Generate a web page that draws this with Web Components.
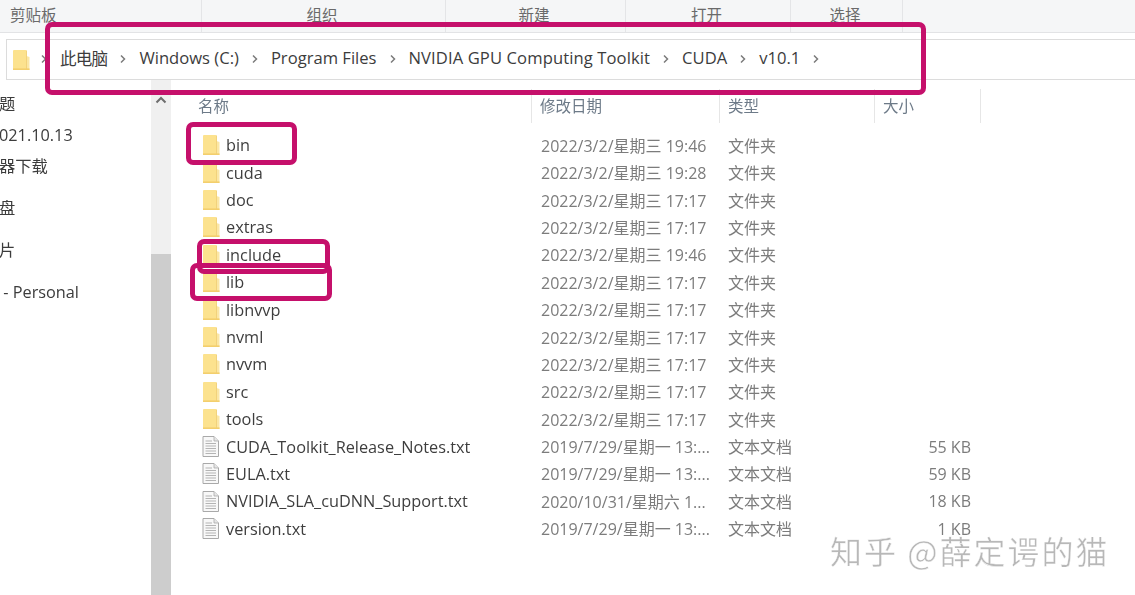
<!DOCTYPE html>
<html lang="zh">
<head>
<meta charset="utf-8">
<title>CUDA v10.1</title>
<style>
  html, body { margin: 0; height: 100%; background: #fff; overflow: hidden; }
  body { font-family: "Open Sans", "Noto Sans CJK SC", sans-serif; }
</style>
</head>
<body>
<explorer-window></explorer-window>

<script>
const FONT = `"Open Sans", "Noto Sans CJK SC", sans-serif`;

const FOLDER_ICON = `
<svg width="18" height="22" viewBox="0 0 18 22">
  <path d="M1 2Q1 1 2 1H13.5Q14.5 1 14.5 2V21H2Q1 21 1 20Z" fill="#fce28e"/>
  <path d="M14.5 7 17.5 8V21H14.5Z" fill="#fbe7a6"/>
  <path d="M14.5 1.5V20" stroke="#efcb6c" stroke-width=".8"/>
  <path d="M1 20.2H17.5" stroke="#f3cf6d" stroke-width="1.6"/>
</svg>`;

const DOC_ICON = `
<svg width="17" height="21" viewBox="0 0 17 21">
  <path d="M1 .5H12L16.5 5V20.5H1Z" fill="#f8f8f8" stroke="#a9a9a9"/>
  <path d="M12 .5V5H16.5" fill="#e6e6e6" stroke="#a9a9a9" stroke-width=".8"/>
  <path d="M3.5 5H10M3.5 7.5H14M3.5 10H14M3.5 12.5H14M3.5 15H14M3.5 17.5H14" stroke="#b4b4b4"/>
</svg>`;

class RibbonBar extends HTMLElement {
  constructor() {
    super();
    this.attachShadow({ mode: "open" }).innerHTML = `
<style>
  :host {
    display: grid;
    grid-template-columns: 202px 244px 180px 165px 112px 1fr;
    height: 32px;
    background: #f5f6f7;
    border-bottom: 1px solid #e2e3e5;
    font: 15.5px ${FONT};
    color: #6a6a6a;
  }
  div { text-align: center; line-height: 30px; border-right: 1px solid #e4e5e7; overflow: hidden; padding-right: 3px; }
  div:first-of-type { text-align: left; padding-left: 10px; }
  div:last-of-type { border: 0; }
</style>
<div>剪贴板</div><div>组织</div><div>新建</div><div>打开</div><div>选择</div><div></div>`;
  }
}

class AddressBar extends HTMLElement {
  constructor() {
    super();
    const parts = ["此电脑", "Windows (C:)", "Program Files", "NVIDIA GPU Computing Toolkit", "CUDA", "v10.1"];
    const chev = `<svg class="chev" width="6" height="10" viewBox="0 0 6 10"><path d="M1 1.5 4.5 5 1 8.5" fill="none" stroke="#7b7b7b" stroke-width="1.5"/></svg>`;
    this.attachShadow({ mode: "open" }).innerHTML = `
<style>
  :host {
    display: flex;
    align-items: center;
    margin: 6px 0 0 6px;
    padding: 0 0 4px 5px;
    height: 35px;
    background: #fff;
    border: 1px solid #dcdcdc;
    border-right: 0;
    font: 16.6px ${FONT};
    color: #3c3c3c;
    white-space: nowrap;
  }
  .home { display: flex; margin: 4px 11px 0 0; }
  .chev { margin: 2px 13px 0 13px; flex: none; }
  .home + .chev { margin: 2px 13px 0 0; }
  .p0 { letter-spacing: -.8px; }
  .p3 { letter-spacing: .1px; }
</style>
<span class="home">${FOLDER_ICON}</span>${chev}${parts.map((p, i) => `<span class="p${i}">${p}</span>${chev}`).join("")}`;
  }
}

class NavPane extends HTMLElement {
  constructor() {
    super();
    this.attachShadow({ mode: "open" }).innerHTML = `
<style>
  :host {
    display: flex;
    flex-direction: column;
    width: 151px;
    flex: none;
    padding-top: 13px;
    box-sizing: border-box;
    font: 16.3px/22px ${FONT};
    color: #3c3c3c;
    white-space: nowrap;
    overflow: hidden;
  }
  div { margin-left: -1px; }
  .a { margin-top: 9px; }
  .b { margin-top: 20px; }
</style>
<div>题</div>
<div class="a">021.10.13</div>
<div class="a">器下载</div>
<div class="b">盘</div>
<div class="b">片</div>
<div class="b">&nbsp;- Personal</div>`;
  }
}

class ScrollTrack extends HTMLElement {
  constructor() {
    super();
    this.attachShadow({ mode: "open" }).innerHTML = `
<style>
  :host {
    display: flex;
    flex-direction: column;
    width: 20px;
    flex: none;
    background: #f0f0f0;
  }
  .up { height: 174px; display: flex; justify-content: center; padding-top: 16px; box-sizing: border-box; }
  .thumb { flex: 1; background: #cdcdcd; }
</style>
<div class="up"><svg width="12" height="8" viewBox="0 0 12 8"><path d="M1.5 6.5 6 2l4.5 4.5" fill="none" stroke="#6e6e6e" stroke-width="2"/></svg></div>
<div class="thumb"></div>`;
  }
}

class ColumnHeader extends HTMLElement {
  constructor() {
    super();
    this.attachShadow({ mode: "open" }).innerHTML = `
<style>
  :host {
    display: grid;
    grid-template-columns: 361px 188px 155px 106px;
    height: 34px;
    margin-top: 9px;
    font: 15.5px/34px ${FONT};
    color: #6d7a88;
  }
  div { border-right: 1px solid #e6e6e6; padding-left: 8px; }
  div:first-of-type { padding-left: 27px; }
</style>
<div>名称</div><div>修改日期</div><div>类型</div><div>大小</div>`;
  }
}

class FileRow extends HTMLElement {
  constructor() {
    super();
    this.attachShadow({ mode: "open" }).innerHTML = `
<style>
  :host {
    display: grid;
    grid-template-columns: 28px 315px 187px 120px 123px;
    align-items: center;
    height: 27.4px;
    font: 16.3px ${FONT};
    white-space: nowrap;
  }
  .icon { display: flex; padding-left: 4px; }
  .name { color: #3e3e3e; }
  .date, .type, .size { color: #7c7c7c; font-size: 16px; }
  .date, .type { padding-bottom: 1px; }
  .size { text-align: right; }
</style>
<span class="icon"></span><span class="name"></span><span class="date"></span><span class="type"></span><span class="size"></span>`;
  }

  connectedCallback() {
    const root = this.shadowRoot;
    root.querySelector(".icon").innerHTML = this.getAttribute("kind") === "doc" ? DOC_ICON : FOLDER_ICON;
    root.querySelector(".name").textContent = this.getAttribute("name");
    root.querySelector(".date").textContent = this.getAttribute("date");
    root.querySelector(".type").textContent = this.getAttribute("kind") === "doc" ? "文本文档" : "文件夹";
    root.querySelector(".size").textContent = this.getAttribute("size") || "";
  }
}

class FileList extends HTMLElement {
  constructor() {
    super();
    this.attachShadow({ mode: "open" }).innerHTML = `
<style>
  :host { display: block; flex: 1; min-width: 0; }
  .rows { margin: 8.6px 0 0 27px; width: 773px; }
</style>
<column-header></column-header>
<div class="rows"><slot></slot></div>`;
  }
}

class MarkBox extends HTMLElement {
  constructor() {
    super();
    this.attachShadow({ mode: "open" }).innerHTML = `
<style>
  :host {
    position: absolute;
    box-sizing: border-box;
    border: 5px solid #c5106b;
    border-radius: 7px;
    filter: blur(.3px);
  }
</style>`;
  }
}

class ExplorerWindow extends HTMLElement {
  constructor() {
    super();
    const folders = [
      ["bin", "19:46"], ["cuda", "19:28"], ["doc", "17:17"], ["extras", "17:17"],
      ["include", "19:46"], ["lib", "17:17"], ["libnvvp", "17:17"], ["nvml", "17:17"],
      ["nvvm", "17:17"], ["src", "17:17"], ["tools", "17:17"],
    ];
    const docs = [
      ["CUDA_Toolkit_Release_Notes.txt", "2019/7/29/星期一 13:...", "55 KB"],
      ["EULA.txt", "2019/7/29/星期一 13:...", "59 KB"],
      ["NVIDIA_SLA_cuDNN_Support.txt", "2020/10/31/星期六 1...", "18 KB"],
      ["version.txt", "2019/7/29/星期一 13:...", "1 KB"],
    ];
    const rows = folders
      .map(([n, t]) => `<file-row kind="folder" name="${n}" date="2022/3/2/星期三 ${t}"></file-row>`)
      .concat(docs.map(([n, d, s]) => `<file-row kind="doc" name="${n}" date="${d}" size="${s}"></file-row>`))
      .join("");
    this.attachShadow({ mode: "open" }).innerHTML = `
<style>
  :host { display: flex; flex-direction: column; height: 595px; position: relative; overflow: hidden; }
  .main { display: flex; flex: 1; min-height: 0; }
  .content { filter: blur(.5px); display: flex; flex-direction: column; height: 100%; }
  .wm {
    position: absolute;
    left: 830px;
    top: 535px;
    font: 32px/31px "Noto Sans CJK SC", sans-serif;
    letter-spacing: 2px;
    color: #b8b8b8;
    -webkit-text-stroke: .4px #fff;
    white-space: nowrap;
  }
  .m1 { left: 45px; top: 22px; width: 881px; height: 73px; }
  .m2 { left: 186px; top: 122px; width: 111px; height: 43px; }
  .m3 { left: 197px; top: 239px; width: 133px; height: 35px; }
  .m4 { left: 190px; top: 263px; width: 142px; height: 38px; }
</style>
<div class="content">
  <ribbon-bar></ribbon-bar>
  <address-bar></address-bar>
  <div class="main">
    <nav-pane></nav-pane>
    <scroll-track></scroll-track>
    <file-list>${rows}</file-list>
  </div>
</div>
<mark-box class="m1"></mark-box>
<mark-box class="m2"></mark-box>
<mark-box class="m3"></mark-box>
<mark-box class="m4"></mark-box>
<div class="wm">知乎 @薛定谔的猫</div>`;
  }
}

customElements.define("ribbon-bar", RibbonBar);
customElements.define("address-bar", AddressBar);
customElements.define("nav-pane", NavPane);
customElements.define("scroll-track", ScrollTrack);
customElements.define("column-header", ColumnHeader);
customElements.define("file-row", FileRow);
customElements.define("file-list", FileList);
customElements.define("mark-box", MarkBox);
customElements.define("explorer-window", ExplorerWindow);
</script>
</body>
</html>
